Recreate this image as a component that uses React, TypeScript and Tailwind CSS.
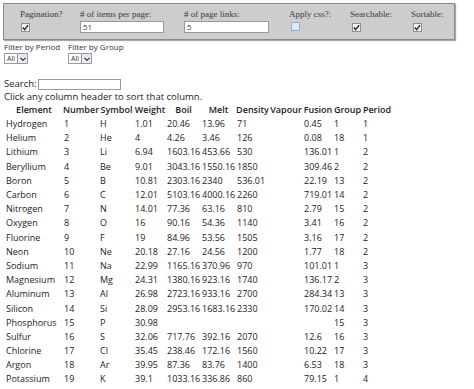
import React from 'react';

type Row = [string, string, string, string, string, string, string, string, string, string, string];

const rows: Row[] = [
  ['Hydrogen', '1', 'H', '1.01', '20.46', '13.96', '71', '', '0.45', '1', '1'],
  ['Helium', '2', 'He', '4', '4.26', '3.46', '126', '', '0.08', '18', '1'],
  ['Lithium', '3', 'Li', '6.94', '1603.16', '453.66', '530', '', '136.01', '1', '2'],
  ['Beryllium', '4', 'Be', '9.01', '3043.16', '1550.16', '1850', '', '309.46', '2', '2'],
  ['Boron', '5', 'B', '10.81', '2303.16', '2340', '536.01', '', '22.19', '13', '2'],
  ['Carbon', '6', 'C', '12.01', '5103.16', '4000.16', '2260', '', '719.01', '14', '2'],
  ['Nitrogen', '7', 'N', '14.01', '77.36', '63.16', '810', '', '2.79', '15', '2'],
  ['Oxygen', '8', 'O', '16', '90.16', '54.36', '1140', '', '3.41', '16', '2'],
  ['Fluorine', '9', 'F', '19', '84.96', '53.56', '1505', '', '3.16', '17', '2'],
  ['Neon', '10', 'Ne', '20.18', '27.16', '24.56', '1200', '', '1.77', '18', '2'],
  ['Sodium', '11', 'Na', '22.99', '1165.16', '370.96', '970', '', '101.01', '1', '3'],
  ['Magnesium', '12', 'Mg', '24.31', '1380.16', '923.16', '1740', '', '136.17', '2', '3'],
  ['Aluminum', '13', 'Al', '26.98', '2723.16', '933.16', '2700', '', '284.34', '13', '3'],
  ['Silicon', '14', 'Si', '28.09', '2953.16', '1683.16', '2330', '', '170.02', '14', '3'],
  ['Phosphorus', '15', 'P', '30.98', '', '', '', '', '', '15', '3'],
  ['Sulfur', '16', 'S', '32.06', '717.76', '392.16', '2070', '', '12.6', '16', '3'],
  ['Chlorine', '17', 'Cl', '35.45', '238.46', '172.16', '1560', '', '10.22', '17', '3'],
  ['Argon', '18', 'Ar', '39.95', '87.36', '83.76', '1400', '', '6.53', '18', '3'],
  ['Potassium', '19', 'K', '39.1', '1033.16', '336.86', '860', '', '79.15', '1', '4'],
];

const headers = ['Element', 'Number', 'Symbol', 'Weight', 'Boil', 'Melt', 'Density', 'Vapour', 'Fusion', 'Group', 'Period'];
const widths = ['w-[58px]', 'w-[36px]', 'w-[35px]', 'w-[32px]', 'w-[35px]', 'w-[35px]', 'w-[33px]', 'w-[34px]', 'w-[30px]', 'w-[29px]', 'w-[30px]'];

function Check({ on, css }: { on?: boolean; css?: boolean }) {
  if (css) {
    return <span className="block w-[9px] h-[9px] border border-[#8fb0d0] bg-[#dce9f6]" />;
  }
  return (
    <span className="flex w-[9px] h-[9px] border border-[#8f8f8f] bg-[#f3f3f3] items-center justify-center">
      {on && (
        <svg width="7" height="7" viewBox="0 0 8 8">
          <path d="M1 4 L3 6.4 L7 1.3" stroke="#222" strokeWidth="1.5" fill="none" />
        </svg>
      )}
    </span>
  );
}

function Select() {
  return (
    <span className="flex w-[24px] h-[11px] border border-[#9a9a9a] bg-white items-center">
      <span className="text-[7px] leading-none pl-[2px] w-[12px]">All</span>
      <span className="flex flex-1 h-full border-l border-[#9a9a9a] bg-[#e4ecf6] items-center justify-center">
        <svg width="6" height="4" viewBox="0 0 6 4">
          <path d="M0.5 0.8 L3 3.3 L5.5 0.8" stroke="#333" strokeWidth="1.2" fill="none" />
        </svg>
      </span>
    </span>
  );
}

export default function App() {
  return (
    <div className="w-[474px] h-[389px] overflow-hidden bg-white text-[#222] font-['Open_Sans',sans-serif] text-[9px]">
      {/* options panel */}
      <div className="mx-[3px] mt-[3px] w-[452px] h-[37px] border border-[#8a8a8a] bg-[#cdcdcd] shadow-[1px_1px_1px_#aaa] flex pl-[16px] pt-[5px] font-['Liberation_Serif',serif] text-[9px] text-[#3a3a3a]">
        <div className="w-[60px]">
          <div className="leading-[11px]">Pagination?</div>
          <div className="mt-[3px] pl-[1px]"><Check on /></div>
        </div>
        <div className="w-[104px]">
          <div className="leading-[11px]"># of items per page:</div>
          <div className="mt-[1px] w-[84px] h-[12px] border border-[#9a9a9a] bg-white font-['Open_Sans',sans-serif] text-[8px] leading-[10px] pl-[2px]">51</div>
        </div>
        <div className="w-[105px]">
          <div className="leading-[11px]"># of page links:</div>
          <div className="mt-[1px] w-[85px] h-[12px] border border-[#9a9a9a] bg-white font-['Open_Sans',sans-serif] text-[8px] leading-[10px] pl-[2px]">5</div>
        </div>
        <div className="w-[61px]">
          <div className="leading-[11px]">Apply css?:</div>
          <div className="mt-[2px] pl-[2px]"><Check css /></div>
        </div>
        <div className="w-[61px]">
          <div className="leading-[11px]">Searchable:</div>
          <div className="mt-[3px] pl-[2px]"><Check on /></div>
        </div>
        <div>
          <div className="leading-[11px]">Sortable:</div>
          <div className="mt-[3px] pl-[2px]"><Check on /></div>
        </div>
      </div>

      {/* filters */}
      <div className="flex pl-[4px] mt-[1px] text-[8px] leading-[11px] text-[#333] whitespace-nowrap">
        <div className="w-[64px]">
          <div>Filter by Period</div>
          <div className="mt-[1px]"><Select /></div>
        </div>
        <div>
          <div>Filter by Group</div>
          <div className="mt-[1px]"><Select /></div>
        </div>
      </div>

      {/* search */}
      <div className="flex items-center pl-[4px] mt-[15px] h-[11px] text-[9.5px]">
        <span>Search:</span>
        <span className="ml-[1px] w-[83px] h-[11px] border border-[#9a9a9a] bg-white" />
      </div>
      <div className="pl-[4px] leading-[12px] mt-[1px] text-[9.5px]">Click any column header to sort that column.</div>

      <table className="ml-[5px] w-[387px] border-collapse table-fixed">
        <thead>
          <tr className="h-[14px]">
            {headers.map((h, i) => (
              <th key={h} className={`${widths[i]} p-0 font-semibold text-center leading-[14px] whitespace-nowrap`}>{h}</th>
            ))}
          </tr>
        </thead>
        <tbody>
          {rows.map((r) => (
            <tr key={r[0]} className="h-[14.2px]">
              {r.map((c, i) => (
                <td key={i} className="p-0 pl-[1px] text-left leading-[14px] whitespace-nowrap">{c}</td>
              ))}
            </tr>
          ))}
        </tbody>
      </table>
    </div>
  );
}
